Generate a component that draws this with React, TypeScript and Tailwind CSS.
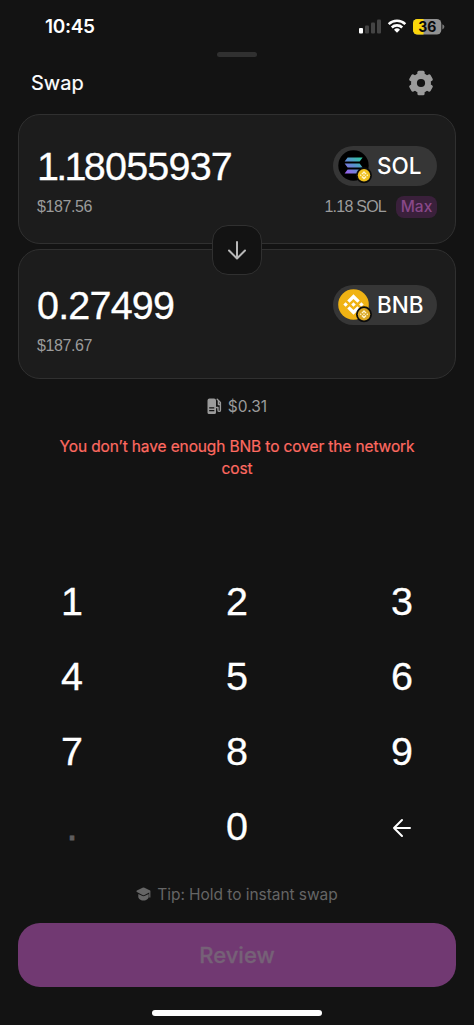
import { useState } from 'react';

interface Token {
  symbol: string;
  amount: string;
  fiat: string;
  balance?: string;
}

const tokens: Token[] = [
  { symbol: 'SOL', amount: '1.18055937', fiat: '$187.56', balance: '1.18 SOL' },
  { symbol: 'BNB', amount: '0.27499', fiat: '$187.67' },
];

const keyRows = [
  ['1', '2', '3'],
  ['4', '5', '6'],
  ['7', '8', '9'],
  ['.', '0', 'back'],
];

// Drawn on a 24x24 grid
function BnbMark() {
  return (
    <>
      <path d="M12 0L19.35 7.35L16.62 10.06L12 5.43L7.36 10.06L4.64 7.35Z" />
      <path d="M12 24L4.64 16.64L7.36 13.92L12 18.57L16.62 13.92L19.35 16.64Z" />
      <path d="M12 9.28L14.7 12L12 14.7L9.27 12Z" />
      <path d="M2.72 9.28L5.41 12L2.72 14.7L0 12Z" />
      <path d="M21.26 9.28L24 12L21.26 14.7L18.57 12Z" />
    </>
  );
}

function TokenIcon({ symbol }: { symbol: string }) {
  return (
    <svg width="34" height="34" viewBox="0 0 34 34" className="shrink-0">
      <defs>
        <linearGradient id="solFill" x1="8" y1="23" x2="22" y2="7" gradientUnits="userSpaceOnUse">
          <stop offset="0" stopColor="#9b62ee" />
          <stop offset="0.5" stopColor="#5c8fd0" />
          <stop offset="1" stopColor="#2fc7a0" />
        </linearGradient>
      </defs>
      {symbol === 'SOL' ? (
        <>
          <circle cx="15.5" cy="15.5" r="15.2" fill="#000" />
          <g fill="url(#solFill)">
            <path d="M9.6 7.4 H24.6 L21.6 11.6 H6.6 Z" />
            <path d="M6.6 13.4 H21.6 L24.6 17.6 H9.6 Z" />
            <path d="M9.6 19.4 H24.6 L21.6 23.6 H6.6 Z" />
          </g>
        </>
      ) : (
        <>
          <circle cx="15.5" cy="15.5" r="15.3" fill="#f0b314" />
          <g fill="#fff" transform="translate(5.3 5.3) scale(0.85)">
            <BnbMark />
          </g>
        </>
      )}
      {/* Network badge */}
      <circle cx="26" cy="25.3" r="8" fill="#0c0c0c" />
      <circle cx="26" cy="25.3" r="6.2" fill={symbol === 'SOL' ? '#f0c11e' : '#d9a521'} />
      <g fill="#fff5cf" transform="translate(21.8 21.1) scale(0.35)">
        <BnbMark />
      </g>
    </svg>
  );
}

function StatusIcons() {
  return (
    <svg width="86" height="18" viewBox="0 0 86 18">
      <rect x="0" y="10" width="4" height="5.6" rx="1" fill="#fff" />
      <rect x="6" y="7.4" width="4" height="8.2" rx="1" fill="#444" />
      <rect x="12" y="4.6" width="4" height="11" rx="1" fill="#444" />
      <rect x="18" y="1.6" width="4" height="14" rx="1" fill="#444" />
      <g fill="none" stroke="#fff" strokeWidth="2.6">
        <path d="M29.7 6.1 A12 12 0 0 1 46.3 6.1" />
        <path d="M32.8 9.5 A7.5 7.5 0 0 1 43.2 9.5" />
      </g>
      <path d="M38 14.8 L35 11.8 A4.3 4.3 0 0 1 41 11.8 Z" fill="#fff" />
      <clipPath id="battery">
        <rect x="54" y="1" width="28.3" height="15.6" rx="4.6" />
      </clipPath>
      <g clipPath="url(#battery)">
        <rect x="54" y="1" width="29" height="16" fill="#929292" />
        <rect x="54" y="1" width="10.5" height="16" fill="#fbd60a" />
      </g>
      <path d="M83.3 6.2 Q85.4 7 85.4 8.8 Q85.4 10.6 83.3 11.4 Z" fill="#777" />
      <text x="68.2" y="13.8" textAnchor="middle" fontSize="14" fontWeight="700" fontFamily="Inter, sans-serif" fill="#0a0a0a">36</text>
    </svg>
  );
}

function GearIcon() {
  return (
    <svg width="26" height="26" viewBox="0 0 26 26" fill="#9b9b9b">
      <circle cx="13" cy="13" r="10" />
      <rect x="9.4" y="0.8" width="7.2" height="24.4" rx="1.5" />
      <rect x="9.4" y="0.8" width="7.2" height="24.4" rx="1.5" transform="rotate(60 13 13)" />
      <rect x="9.4" y="0.8" width="7.2" height="24.4" rx="1.5" transform="rotate(120 13 13)" />
      <circle cx="13" cy="13" r="4.1" fill="#131313" />
    </svg>
  );
}

function TokenCard({ token }: { token: Token }) {
  return (
    <section className={`h-[130px] rounded-[22px] border border-[#303030] bg-[#1c1c1c] px-[18px] ${token.balance ? 'pt-[31px]' : 'pt-[35px]'}`}>
      <div className="flex h-10 items-center justify-between">
        <span className="font-['Liberation_Sans'] text-[39.5px] leading-10 tracking-[-0.8px] text-white [-webkit-text-stroke:0.3px_#fff]">
          {token.amount.startsWith('1.1') ? (
            <>
              <span className="tracking-[-2.7px]">1.1</span>
              {token.amount.slice(3)}
            </>
          ) : (
            token.amount
          )}
        </span>
        <button className="flex h-10 w-[104px] items-center rounded-full bg-[#363636] pl-[5px] pt-[1px]">
          <TokenIcon symbol={token.symbol} />
          <span className="ml-[5px] mt-[-2px] text-[22.5px] font-medium text-white">{token.symbol}</span>
        </button>
      </div>
      <div className="mt-[10px] flex h-[22px] items-center justify-between text-[#9b9b9b]">
        <span className="font-['Liberation_Sans'] text-[16px] tracking-[-0.4px]">{token.fiat}</span>
        {token.balance && (
          <div className="flex items-center gap-[10px]">
            <span className="font-['Liberation_Sans'] text-[16px] tracking-[-0.75px]">{token.balance}</span>
            <span className="mt-[-1px] flex h-[22px] w-[41px] items-center justify-center rounded-lg bg-[#3a203b] text-[15.5px] font-medium text-[#884889]">Max</span>
          </div>
        )}
      </div>
    </section>
  );
}

export default function App() {
  const [from, to] = tokens;
  const [pressed, setPressed] = useState('');

  return (
    <div className="flex h-[1025px] w-[474px] flex-col overflow-hidden bg-[#131313] font-['Inter','Liberation_Sans',sans-serif]">
      {/* Status bar */}
      <div className="flex h-[52px] items-center justify-between pl-[45px] pr-[29px] pt-[2px]">
        <span className="pt-[1px] text-[19px] font-semibold tracking-[-0.3px] text-white">10:45</span>
        <StatusIcons />
      </div>
      <div className="mx-auto h-[5px] w-10 rounded-full bg-[#303030]" />

      <header className="flex h-[57px] items-center justify-between pb-[6px] pl-[31px] pr-[40px]">
        <h1 className="text-[20px] text-white [-webkit-text-stroke:0.2px_#fff]">Swap</h1>
        <GearIcon />
      </header>

      <main className="flex flex-col px-[18px]">
        <div className="relative flex flex-col gap-[5px]">
          <TokenCard token={from} />
          <TokenCard token={to} />
          <button className="absolute left-1/2 top-[111px] flex size-[50px] -translate-x-1/2 items-center justify-center rounded-2xl border border-[#303030] bg-[#131313]">
            <svg width="20" height="20" viewBox="0 0 20 20" fill="none" stroke="#b8b8b8" strokeWidth="2" strokeLinecap="round" strokeLinejoin="round">
              <path d="M10 2V18M2 10.5l8 8 8-8" />
            </svg>
          </button>
        </div>

        {/* Network cost */}
        <div className="mt-[15px] flex h-6 items-center justify-center gap-[6px] text-[#9b9b9b]">
          <svg width="15" height="17" viewBox="0 0 15 17">
            <path d="M2.5 0.5h4.5a2 2 0 0 1 2 2V14.500a1.500 1.500 0 0 1-1.500 1.500h-5.500a1.500 1.500 0 0 1-1.500-1.500V2.500a2 2 0 0 1 2-2z" fill="#9b9b9b" />
            <path d="M2.200 9.800h5.100M2.200 12.700h5.100" stroke="#131313" strokeWidth="1.200" />
            <path d="M10.200 1.300l3.200 3.200v7.700a1.200 1.200 0 0 1-2.400 0V9.500H9.500M13 6.500h-1.600V3.500" fill="none" stroke="#9b9b9b" strokeWidth="1.400" strokeLinecap="round" strokeLinejoin="round" />
          </svg>
          <span className="pt-[2px] text-[15.5px]">$0.31</span>
        </div>
        <p className="mx-auto mt-[18px] w-[370px] text-center text-[15.5px] leading-[22px] tracking-[-0.12px] text-[#ff6a61] [-webkit-text-stroke:0.2px_#ff6a61]">
          You don’t have enough BNB to cover the network cost
        </p>
      </main>

      {/* Keypad */}
      <div className="mt-[85px] flex flex-col px-[42px]">
        {keyRows.map((row) => (
          <div key={row.join('')} className="flex h-[75px] items-center justify-between">
            {row.map((key) => (
              <button
                key={key}
                onClick={() => setPressed(key)}
                aria-pressed={pressed === key}
                className={`flex h-[60px] w-[60px] items-center justify-center font-['Liberation_Sans'] text-[39.5px] ${key === 'back' ? '' : 'pb-[2px]'} ${key === '.' ? 'text-[#5e5e5e] [-webkit-text-stroke:0.8px_#5e5e5e]' : 'text-white [-webkit-text-stroke:0.3px_#fff]'}`}
              >
                {key === 'back' ? (
                  <svg width="20" height="20" viewBox="0 0 20 20" fill="none" stroke="#fff" strokeWidth="2" strokeLinecap="round" strokeLinejoin="round">
                    <path d="M18 10H2M10 2l-8 8 8 8" />
                  </svg>
                ) : (
                  key
                )}
              </button>
            ))}
          </div>
        ))}
      </div>

      <div className="mt-[17px] flex h-6 items-center justify-center gap-[6px] text-[#656565]">
        <svg width="15" height="14" viewBox="0 0 15 14" fill="#656565">
          <path d="M6.5.7a2 2 0 0 1 2 0l5.6 2.9a.8.8 0 0 1 0 1.4L8.5 7.9a2 2 0 0 1-2 0L.9 5a.8.8 0 0 1 0-1.4z" />
          <path d="M2.3 6.900l3.7 1.900a3 3 0 0 0 3 0l3.7-1.900v3.300c0 .8-2 3.3-5.2 3.3S2.3 11 2.3 10.2zM13.2 5h1.2v5.500h-1.2z" />
        </svg>
        <span className="pt-[1px] text-[15.5px] tracking-[-0.05px]">Tip: Hold to instant swap</span>
      </div>

      <div className="mt-[17px] px-[18px]">
        <button className="h-16 w-full rounded-[22px] bg-[#713972] text-[22px] font-medium text-[#766177] [-webkit-text-stroke:0.3px_#766177]">Review</button>
      </div>
      <div className="mx-auto mt-[23px] h-[6px] w-[170px] shrink-0 rounded-full bg-white" />
    </div>
  );
}
